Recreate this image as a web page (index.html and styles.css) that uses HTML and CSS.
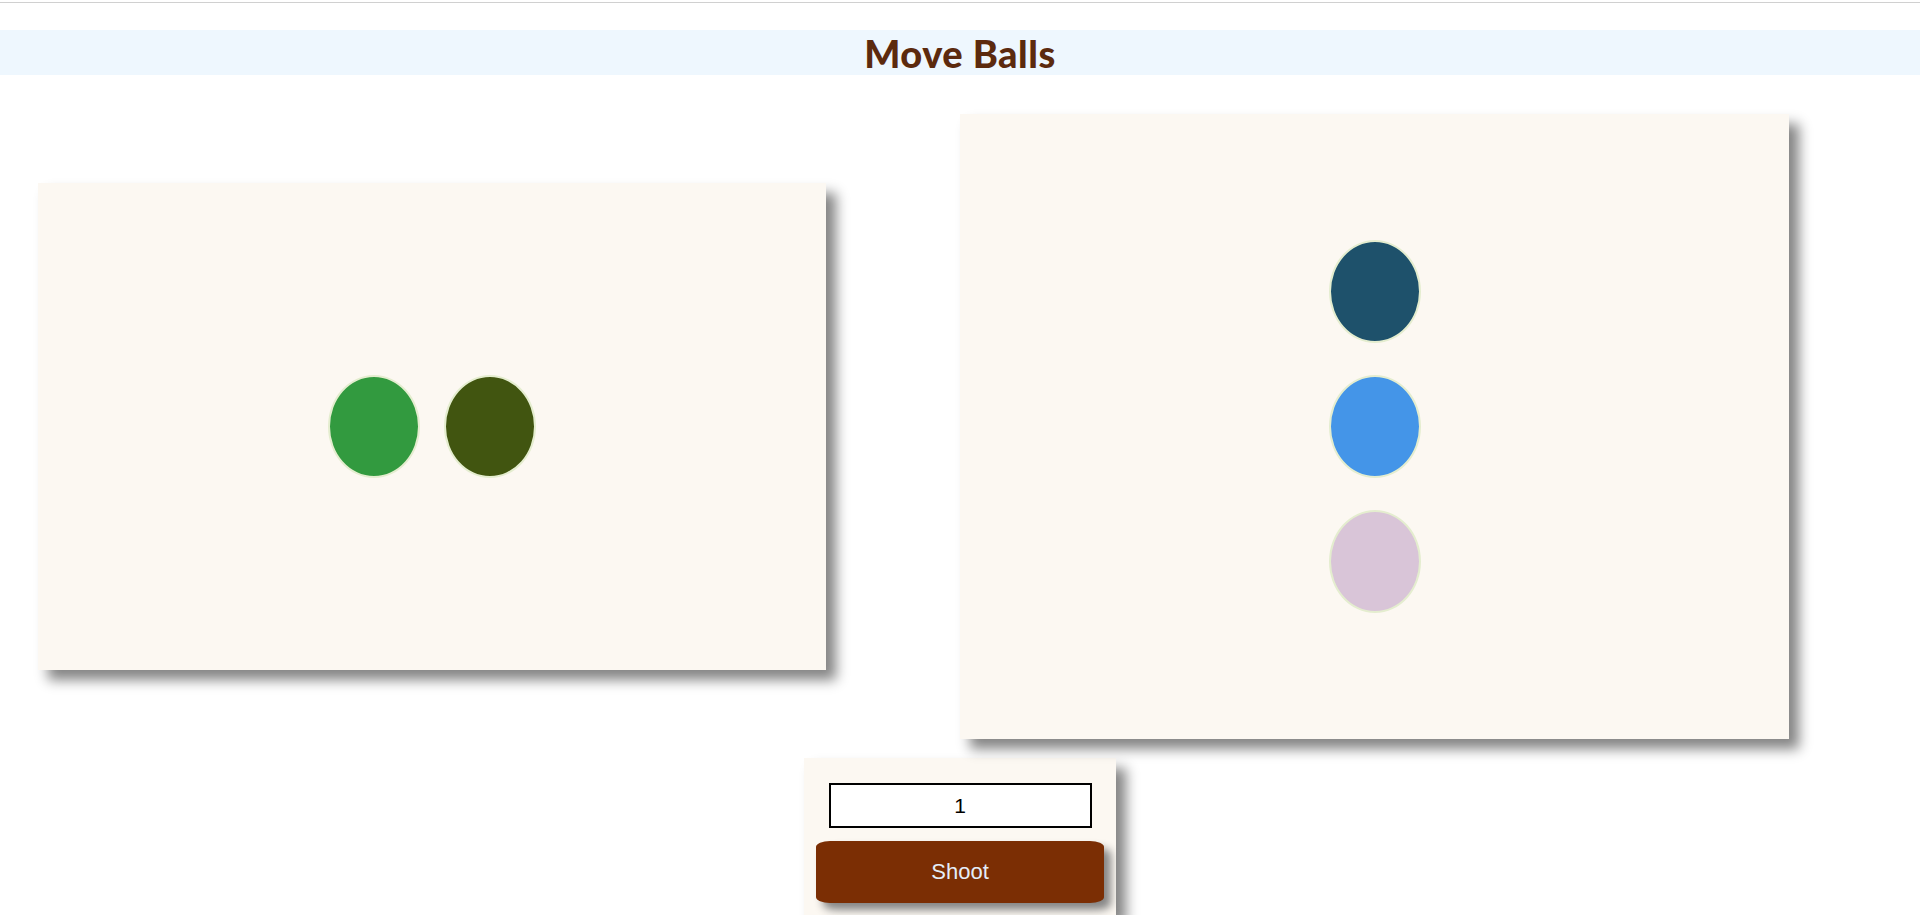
FILE: index.html
```html
<!DOCTYPE html>
<html lang="en">
<head>
<meta charset="utf-8">
<title>Move Balls</title>
<link rel="stylesheet" href="styles.css">
</head>
<body>
<div class="topline"></div>
<h1 class="title">Move Balls</h1>
<div class="stage">
  <div class="panel panel-left">
    <div class="ball ball-green"></div>
    <div class="ball ball-olive"></div>
  </div>
  <div class="panel panel-right">
    <div class="ball ball-teal"></div>
    <div class="ball ball-blue"></div>
    <div class="ball ball-pink"></div>
  </div>
</div>
<div class="controls">
  <input class="count" type="text" value="1">
  <button class="shoot" type="button">Shoot</button>
</div>
</body>
</html>
```

FILE: styles.css
```css
html, body {
  margin: 0;
  padding: 0;
  background: #ffffff;
  overflow: hidden;
}
body {
  font-family: "Liberation Sans", Arial, sans-serif;
}
.topline {
  margin-top: 2px;
  height: 1px;
  background: #d0d0d0;
}
.title {
  margin: 27px 0 0;
  height: 45px;
  line-height: 46px;
  background: #eef7fe;
  text-align: center;
  font-family: Lato, "Open Sans", sans-serif;
  font-weight: 900;
  font-size: 38px;
  letter-spacing: 0.5px;
  color: #5c2a0e;
}
.stage {
  margin-top: 39px;
  display: flex;
  align-items: center;
  padding-left: 38px;
  gap: 134px;
}
.panel {
  background: #fcf8f2;
  box-shadow: 10px 10px 12px #858585;
  display: flex;
  align-items: center;
  justify-content: center;
  flex-shrink: 0;
}
.panel-left {
  width: 788px;
  height: 487px;
  gap: 24px;
}
.panel-right {
  width: 829px;
  height: 625px;
  flex-direction: column;
  gap: 32px;
}
.ball {
  width: 88px;
  height: 99px;
  border: 2px solid #e4edcf;
  border-radius: 50%;
}
.ball-green { background: #329a3f; }
.ball-olive { background: #415510; }
.ball-teal { background: #1e516b; }
.ball-blue { background: #4495e8; }
.ball-pink { background: #d9c5d8; }
.controls {
  width: 312px;
  box-sizing: border-box;
  margin: 19px auto 0;
  padding: 25px 12px 12px;
  background: #fcf8f2;
  box-shadow: 10px 10px 12px #858585;
}
.count {
  display: block;
  box-sizing: border-box;
  width: 263px;
  height: 45px;
  margin: 0 auto;
  border: 2px solid #000000;
  background: #ffffff;
  text-align: center;
  font-family: "Liberation Sans", Arial, sans-serif;
  font-size: 21px;
  color: #000000;
  padding: 0;
}
.shoot {
  display: block;
  width: 100%;
  height: 62px;
  margin-top: 13px;
  border: none;
  border-radius: 14px / 6px;
  background: #7b2e04;
  color: #e4edf8;
  font-family: "Liberation Sans", Arial, sans-serif;
  font-size: 22px;
  box-shadow: 7px 7px 8px #858585;
  cursor: pointer;
}
```
